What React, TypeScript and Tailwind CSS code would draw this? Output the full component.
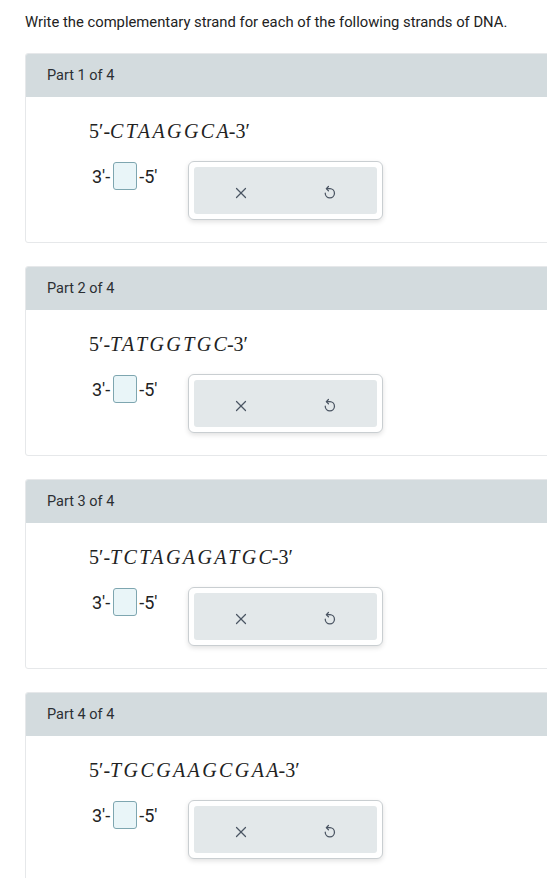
import { X } from "lucide-react";

const parts = [
  "CTAAGGCA",
  "TATGGTGC",
  "TCTAGAGATGC",
  "TGCGAAGCGAA",
];

function UndoIcon() {
  return (
    <svg width="17" height="17" viewBox="0 0 24 24" fill="none" stroke="#4b5563" strokeWidth="1.8" strokeLinecap="round" strokeLinejoin="round">
      <path d="M12.5 6.5 H8" />
      <path d="M10.5 3.5 L7.5 6.5 L10.5 9.5" />
      <path d="M12.5 6.5 A6.5 6.5 0 1 1 6 13" />
    </svg>
  );
}

function Part({ n, seq }: { n: number; seq: string }) {
  return (
    <div className="w-[540px] border border-[#e6e8ea] rounded-[3px] overflow-hidden">
      <div className="h-[43px] bg-[#d3dbde] flex items-center pl-[21px] text-[14.5px] text-[#2b2f33]">
        Part {n} of 4
      </div>
      <div className="pl-[63px] pt-[20px] h-[145px]">
        <div className="text-[20px] text-[#222] font-['Liberation_Serif',serif] leading-[28px]">
          5′-<span className="italic tracking-[2.4px]">{seq.slice(0, -1)}</span>
          <span className="italic">{seq.slice(-1)}</span>-3′
        </div>
        <div className="flex items-start mt-[16px]">
          <div className="flex items-center pl-[3px] pt-[1px] text-[18px] text-[#222]">
            <span>3′-</span>
            <span className="w-[24px] h-[28px] border border-[#7ea6b0] bg-[#e9f5f8] rounded-[3px] ml-[3px] mr-[2px]"></span>
            <span>-5′</span>
          </div>
          <div className="ml-[30px] w-[195px] h-[59px] bg-white border border-[#c9ced1] rounded-[6px] shadow-[0_2px_5px_rgba(0,0,0,0.12)] p-[5px]">
            <div className="w-full h-full bg-[#e3e8ea] rounded-[3px] flex items-center pl-[5px]">
              <div className="w-[88px] flex justify-center pt-[4px]">
                <X size={18} color="#4b5563" strokeWidth={1.6} />
              </div>
              <div className="w-[98px] flex justify-center pt-[4px]">
                <UndoIcon />
              </div>
            </div>
          </div>
        </div>
      </div>
    </div>
  );
}

export default function App() {
  return (
    <div className="w-[547px] h-[878px] bg-white overflow-hidden font-['Roboto',sans-serif]">
      <div className="pl-[25px] pt-[12px]">
        <p className="text-[14.8px] text-[#222] leading-[20px]">
          Write the complementary strand for each of the following strands of DNA.
        </p>
        <div className="flex flex-col gap-[23px] mt-[21px]">
          {parts.map((s, i) => (
            <Part key={i} n={i + 1} seq={s} />
          ))}
        </div>
      </div>
    </div>
  );
}
